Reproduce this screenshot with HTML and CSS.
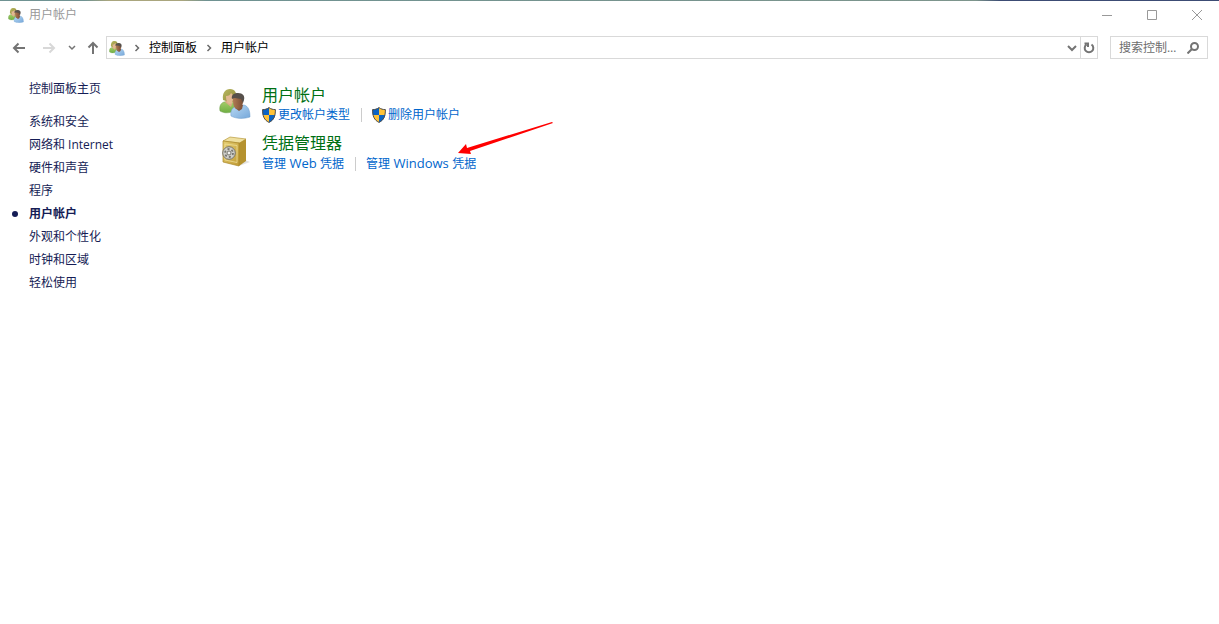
FILE: index.html
```
<!DOCTYPE html>
<html lang="zh-CN">
<head>
  <meta charset="utf-8">
  <title>用户帐户</title>
  <link rel="stylesheet" href="styles.css">
</head>
<body>
  <svg class="defs" aria-hidden="true">
    <defs>
      <linearGradient id="hair" x1="0" y1="0" x2="1" y2="1">
        <stop offset="0" stop-color="#b9b860"/>
        <stop offset="1" stop-color="#8f8a38"/>
      </linearGradient>
      <linearGradient id="green" x1="0" y1="0" x2="0" y2="1">
        <stop offset="0" stop-color="#a8cf6c"/>
        <stop offset="1" stop-color="#6fae42"/>
      </linearGradient>
      <linearGradient id="blue" x1="0" y1="0" x2="1" y2="1">
        <stop offset="0" stop-color="#b9d9f3"/>
        <stop offset="1" stop-color="#76a8da"/>
      </linearGradient>
      <linearGradient id="brown" x1="0" y1="0" x2="1" y2="0">
        <stop offset="0" stop-color="#b07a54"/>
        <stop offset="1" stop-color="#7a4d34"/>
      </linearGradient>
      <linearGradient id="gold" x1="0" y1="0" x2="1" y2="1">
        <stop offset="0" stop-color="#e4cd70"/>
        <stop offset="1" stop-color="#c29c36"/>
      </linearGradient>
    </defs>
    <symbol id="users" viewBox="0 0 32 32">
      <path d="M1 24c-1-5 1-8 4-9l9-1 3 9c-5 3-11 4-16 1z" fill="url(#green)" stroke="#6a9d48" stroke-width=".5"/>
      <path d="M6 15l6 5 2-6-5-3z" fill="#d9ab85"/>
      <path d="M4 13C3 6 6 2 11 2c5 0 7 4 6 9l-3 4-7-1z" fill="url(#hair)"/>
      <path d="M7 9c3 0 4-1 5-3 2 1 2 3 2 5 0 3-1 6-3 6-3 0-4-4-4-8z" fill="#e2b892"/>
      <path d="M12 29c-1-6 2-9 6-10l7-1c4 1 6 5 6 12-6 2-14 2-19-1z" fill="url(#blue)" stroke="#6a9bcb" stroke-width=".5"/>
      <path d="M16 18h8l-1 4-3 2-4-3z" fill="#83563e"/>
      <path d="M14 13c0-4 2-6 5-6 4 0 6 3 5 7 0 4-2 8-5 8-4 0-5-4-5-9z" fill="url(#brown)"/>
      <path d="M13 12c-1-4 2-6 6-6 5 0 7 3 6 7l-1 3-2-4c-3 0-6-2-9 0z" fill="#57504b"/>
    </symbol>
    <symbol id="safe" viewBox="0 0 32 32">
      <path d="M26 25l5 2-11 4z" fill="#e2e2e2"/>
      <path d="M4 6l7-4 16 2-6 4z" fill="#efe0a0" stroke="#b89a3c" stroke-width=".7"/>
      <path d="M20 8l7-4v22l-7 5z" fill="#b5922f"/>
      <path d="M4 6l16 2v23L4 27z" fill="url(#gold)" stroke="#a98628" stroke-width=".7"/>
      <path d="M6 9l12 1.500v17L6 25z" fill="none" stroke="#f1e3a0" stroke-width=".7"/>
      <circle cx="10" cy="18" r="6.300" fill="#cfcfca" stroke="#77736a"/>
      <circle cx="10" cy="18" r="4" fill="none" stroke="#777670" stroke-width="1.800" stroke-dasharray="2.100 2.100"/>
      <circle cx="10" cy="18" r="2" fill="#f0f0ee" stroke="#77756e"/>
    </symbol>
    <symbol id="shield" viewBox="0 0 14 16">
      <path d="M7 .5c2 1.500 4 2 6.500 2C13.500 9 12 13 7 15.500 2 13 .5 9 .5 2.500 3 2.500 5 2 7 .5z" fill="#ffc238"/>
      <path d="M7 .5V8H.8C.5 6 .5 4 .5 2.500 3 2.500 5 2 7 .5z" fill="#0a63c4"/>
      <path d="M7 8h6.200c-.7 3.500-2.600 6-6.200 7.500z" fill="#0a63c4"/>
      <path d="M7 .6c2 1.500 4 2 6.400 2C13.400 9 12 13 7 15.400 2 13 .6 9 .6 2.600 3 2.600 5 2.100 7 .6z" fill="none" stroke="#4b4d50"/>
    </symbol>
    <symbol id="chevron" viewBox="0 0 6 8">
      <path d="M1.500 1l3 3-3 3" fill="none" stroke="#6a6a6a" stroke-width="1.500"/>
    </symbol>
  </svg>

  <header class="titlebar">
    <svg class="icon-small"><use href="#users"/></svg>
    <h1 class="title">用户帐户</h1>
    <div class="window-buttons">
      <button aria-label="最小化"><svg width="12" height="12"><path d="M1 6.500h10"/></svg></button>
      <button aria-label="最大化"><svg width="12" height="12"><path d="M1.500 1.500h9v9h-9z"/></svg></button>
      <button aria-label="关闭"><svg width="12" height="12"><path d="M1 1l10 10M11 1L1 11"/></svg></button>
    </div>
  </header>

  <nav class="toolbar">
    <div class="history">
      <button class="btn-back" aria-label="后退"><svg width="14" height="12"><path d="M13 6H2M6.500 1.500L2 6l4.500 4.500"/></svg></button>
      <button class="btn-forward" aria-label="前进" disabled><svg width="14" height="12"><path d="M1 6h11M7.500 1.500L12 6l-4.500 4.500"/></svg></button>
      <button class="btn-recent" aria-label="最近的位置"><svg width="8" height="6"><path d="M1 1l3 3 3-3"/></svg></button>
      <button class="btn-up" aria-label="上移"><svg width="12" height="14"><path d="M6 13V2M1.500 6.500L6 2l4.500 4.500"/></svg></button>
    </div>
    <div class="address">
      <svg class="icon-small"><use href="#users"/></svg>
      <svg class="chevron"><use href="#chevron"/></svg>
      <a href="#">控制面板</a>
      <svg class="chevron"><use href="#chevron"/></svg>
      <a href="#">用户帐户</a>
      <button class="btn-drop" aria-label="以前的位置"><svg width="10" height="8"><path d="M1 2l4 4 4-4"/></svg></button>
      <button class="btn-refresh" aria-label="刷新"><svg width="12" height="14"><path d="M8.500 3.500A4.300 4.300 0 1 1 3.500 3.500M1.500 2.500H5V6"/></svg></button>
    </div>
    <form class="search">
      <input type="text" placeholder="搜索控制面板" aria-label="搜索控制面板">
      <button type="button" aria-label="搜索"><svg width="12" height="12"><circle cx="7.500" cy="4.500" r="3.500"/><path d="M5 7l-4.500 4.500"/></svg></button>
    </form>
  </nav>

  <div class="content">
    <aside class="sidebar">
      <a class="home" href="#">控制面板主页</a>
      <ul>
        <li><a href="#">系统和安全</a></li>
        <li><a href="#">网络和 Internet</a></li>
        <li><a href="#">硬件和声音</a></li>
        <li><a href="#">程序</a></li>
        <li class="active"><a href="#">用户帐户</a></li>
        <li><a href="#">外观和个性化</a></li>
        <li><a href="#">时钟和区域</a></li>
        <li><a href="#">轻松使用</a></li>
      </ul>
    </aside>

    <main class="categories">
      <section class="category">
        <svg class="icon-large"><use href="#users"/></svg>
        <div>
          <h2><a href="#">用户帐户</a></h2>
          <div class="tasks">
            <a href="#"><svg class="shield"><use href="#shield"/></svg>更改帐户类型</a>
            <a href="#"><svg class="shield"><use href="#shield"/></svg>删除用户帐户</a>
          </div>
        </div>
      </section>
      <section class="category">
        <svg class="icon-large"><use href="#safe"/></svg>
        <div>
          <h2><a href="#">凭据管理器</a></h2>
          <div class="tasks">
            <a href="#"><span>管理<span class="latin"> Web </span>凭据</span></a>
            <a href="#"><span>管理<span class="latin"> Windows </span>凭据</span></a>
          </div>
        </div>
      </section>
      <svg class="arrow" viewBox="0 0 96 34"><path d="M94 0l1 1L12 29l1 3-13-1 8-9 1 4z"/></svg>
    </main>
  </div>
</body>
</html>
```

FILE: styles.css
```
* {
  box-sizing: border-box;
}

body {
  margin: 0;
  background: #fff;
  color: #000;
  font-family: "Open Sans", "Noto Sans CJK SC", sans-serif;
  font-size: 12px;
  line-height: 18px;
}

a {
  color: inherit;
  text-decoration: none;
}

.tasks a:hover,
.sidebar a:hover {
  text-decoration: underline;
}

svg {
  display: block;
  flex: none;
}

button {
  display: flex;
  align-items: center;
  justify-content: center;
  padding: 0;
  border: none;
  background: none;
}

button svg {
  fill: none;
  stroke: #747474;
  stroke-width: 2;
}

.defs {
  position: absolute;
  width: 0;
  height: 0;
}

.icon-small {
  width: 16px;
  height: 16px;
}

.icon-large {
  width: 32px;
  height: 32px;
  margin-top: 2px;
}

/* title bar */
.titlebar {
  display: flex;
  align-items: center;
  height: 29px;
  padding-left: 8px;
  border-top: 1px solid;
  border-image: linear-gradient(90deg, #6f9292 7%, #aaa67e 9%, #aaa67e 15%, #6f9292 17%, #7d958c 80%, #3c4c74 82%) 1;
}

.title {
  margin: 0 0 0 5px;
  color: #999;
  font-size: 12px;
  font-weight: 400;
}

.window-buttons {
  display: flex;
  margin-left: auto;
}

.window-buttons button {
  width: 45px;
  height: 28px;
}

.window-buttons svg {
  stroke: #999;
  stroke-width: 1;
}

/* navigation */
.toolbar {
  display: flex;
  height: 23px;
  margin: 7px 11px 0 12px;
}

.history {
  display: flex;
  align-items: center;
  width: 94px;
}

.btn-forward {
  margin-left: 16px;
}

.btn-forward svg {
  stroke: #d8d8d8;
}

.btn-recent {
  margin-left: 12px;
}

.btn-recent svg {
  stroke-width: 1.500;
}

.btn-up {
  margin-left: 11px;
}

.address {
  display: flex;
  flex: 1;
  align-items: center;
  padding-left: 2px;
  border: 1px solid #d9d9d9;
}

.address a {
  line-height: 20px;
}

.chevron {
  width: 6px;
  height: 8px;
  margin: 0 9px;
}

.btn-drop {
  width: 16px;
  height: 21px;
  margin-left: auto;
}

.btn-refresh {
  width: 17px;
  height: 21px;
  border-left: 1px solid #d9d9d9;
}

.btn-refresh svg {
  stroke-width: 2;
}

.search {
  display: flex;
  align-items: center;
  width: 98px;
  margin-left: 12px;
  padding: 0 8px;
  border: 1px solid #d9d9d9;
}

.search input {
  flex: 1;
  min-width: 0;
  padding: 0;
  border: none;
  outline: none;
  background: none;
  font: inherit;
  text-overflow: ellipsis;
}

.search input::placeholder {
  color: #6d6d6d;
}

.search button {
  width: 20px;
  padding-left: 8px;
}

/* content */
.content {
  display: flex;
  padding-top: 18px;
}

.sidebar {
  width: 190px;
  padding-left: 29px;
  margin-right: 29px;
  color: #151c55;
  line-height: 23px;
}

.home {
  display: block;
}

.sidebar ul {
  margin: 10px 0 0;
  padding: 0;
  list-style: none;
}

.sidebar .active {
  display: flex;
  align-items: center;
  margin-left: -17px;
  font-weight: 700;
}

.active::before {
  content: "";
  width: 6px;
  height: 6px;
  margin-right: 11px;
  border-radius: 50%;
  background: #151c55;
}

.categories {
  position: relative;
  flex: 1;
  padding-top: 8px;
}

.category {
  display: flex;
  gap: 11px;
  margin-bottom: 9px;
}

.category h2 {
  margin: 0;
  color: #007014;
  font-size: 16px;
  font-weight: 400;
  line-height: 20px;
}

.tasks {
  display: flex;
  margin-top: 1px;
  color: #0066cc;
}

.tasks a {
  display: flex;
  align-items: center;
}

.tasks a + a::before {
  content: "";
  width: 1px;
  height: 14px;
  margin: 0 10px 0 11px;
  background: #ccc;
}

.latin {
  font-size: 13px;
}

.shield {
  width: 14px;
  height: 16px;
  margin-right: 2px;
}

/* pointer over the credential link */
.arrow {
  position: absolute;
  top: 45px;
  left: 239px;
  width: 96px;
  height: 34px;
  fill: #f00;
}
```
